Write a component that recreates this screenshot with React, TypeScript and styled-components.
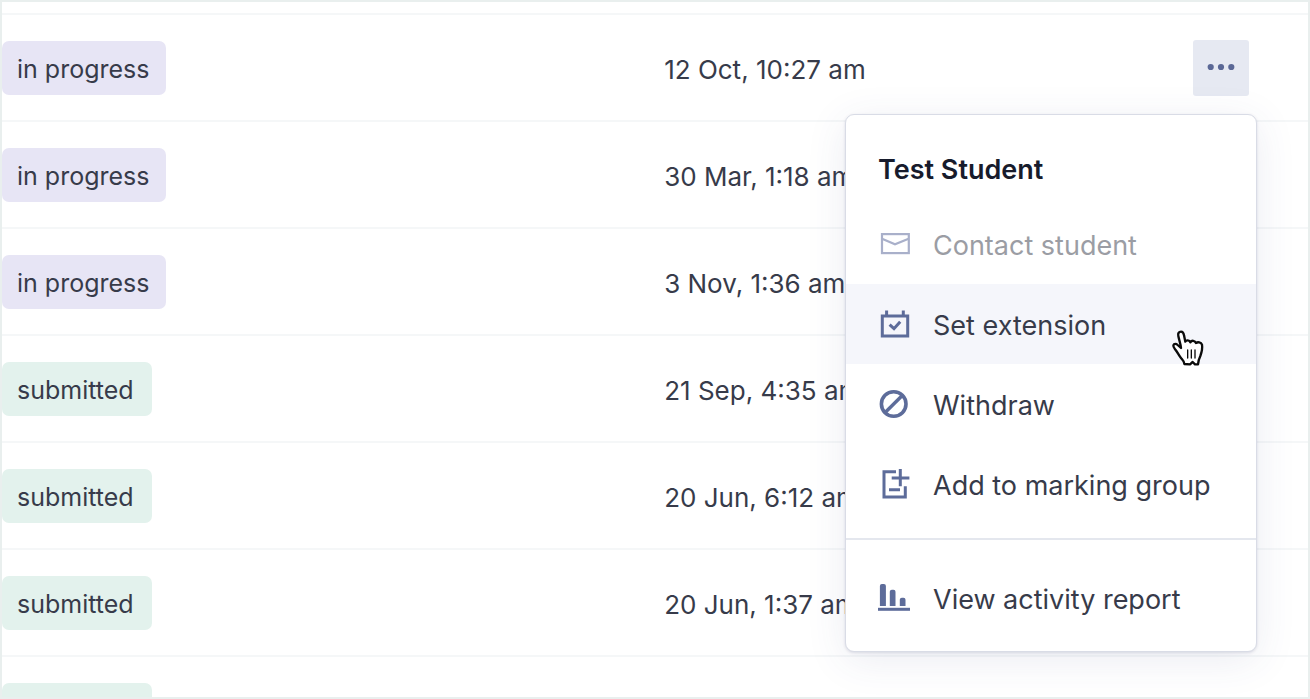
import React from "react";
import styled, { createGlobalStyle } from "styled-components";

const GlobalStyle = createGlobalStyle`
  *, *::before, *::after { box-sizing: border-box; }
  body {
    margin: 0;
    background: #fff;
    color: #373b4a;
    font-family: Inter, "Liberation Sans", sans-serif;
    font-size: 25px;
    line-height: 32px;
  }
`;

const Page = styled.main`
  height: 100vh;
  overflow: hidden;
  border: 2px solid #e9efee;
  padding-top: 11px;
`;

const Table = styled.table`
  width: 100%;
  table-layout: fixed;
  border-collapse: separate;
  border-spacing: 0;
`;

const Row = styled.tr`
  height: 107px;
`;

const Cell = styled.td<{ $width?: string }>`
  width: ${(p) => p.$width ?? "auto"};
  padding: 1px 0 0;
  border-top: 2px solid #f5f7f8;
  vertical-align: middle;
  white-space: nowrap;
`;

const Status = styled.span<{ $tone: "progress" | "submitted" }>`
  display: inline-block;
  min-width: 150px;
  min-height: 54px;
  padding: 12px 17px 10px 15px;
  border-radius: 7px;
  vertical-align: middle;
  background: ${(p) => (p.$tone === "progress" ? "#e7e5f5" : "#e3f2ed")};
`;

const DateText = styled.time`
  display: block;
  padding-top: 4px;
  font-size: 26px;
`;

const Actions = styled.div`
  position: relative;
  display: flex;
  justify-content: flex-end;
  padding: 0 59px 1px 0;
`;

const MoreButton = styled.button`
  display: flex;
  align-items: center;
  justify-content: center;
  width: 56px;
  height: 56px;
  padding: 0 0 2px;
  border: 0;
  border-radius: 3px;
  background: #e6e9f2;
  color: #5b6896;
  cursor: pointer;
`;

const Menu = styled.div`
  position: absolute;
  z-index: 1;
  top: 74px;
  right: 51px;
  width: 412px;
  padding: 39px 0 13px;
  border: 1px solid #d9dce6;
  border-radius: 9px;
  background: #fff;
  box-shadow: 0 1px 3px rgba(60, 70, 110, 0.16), 0 8px 40px rgba(60, 70, 130, 0.1);
`;

const MenuTitle = styled.h2`
  margin: 0 0 18px;
  padding: 0 32px;
  color: #171b2c;
  font-size: 27px;
  font-weight: 600;
  line-height: 32px;
`;

const MenuItem = styled.button<{ $active?: boolean }>`
  position: relative;
  display: flex;
  align-items: center;
  gap: 23px;
  width: 100%;
  height: 80px;
  padding: 0 32px;
  border: 0;
  background: ${(p) => (p.$active ? "#f5f6fb" : "transparent")};
  color: #373b4a;
  font: inherit;
  font-size: 27px;
  text-align: left;
  white-space: nowrap;
  cursor: pointer;

  &:disabled {
    color: #9b9da4;
    cursor: default;
  }
`;

const MenuLabel = styled.span`
  padding-top: 4px;
`;

const Divider = styled.hr`
  height: 2px;
  margin: 14px 0 18px;
  border: 0;
  background: #e4e7ee;
`;

const Icon = styled.svg<{ $faded?: boolean }>`
  flex: none;
  width: 32px;
  height: 32px;
  fill: none;
  stroke: ${(p) => (p.$faded ? "#a9b0ca" : "#5d6c9a")};
  stroke-width: ${(p) => (p.$faded ? 2.2 : 3)};
`;

const Pointer = styled.svg`
  position: absolute;
  top: 45px;
  right: 51px;
  width: 34px;
  height: 38px;
`;

const MailIcon = () => (
  <Icon $faded viewBox="0 0 32 32" aria-hidden="true">
    <rect x="4" y="6.1" width="26.8" height="19" />
    <path d="M4 10.8l13 5.4 13.6-5.4" />
  </Icon>
);

const CalendarIcon = () => (
  <Icon viewBox="0 0 32 32" aria-hidden="true">
    <rect x="4.3" y="8" width="25.4" height="20" />
    <path d="M8.6 2.6V8M25.3 2.6V8" />
    <path d="M11.6 16.6l4.4 4.1 6.2-7" />
  </Icon>
);

const WithdrawIcon = () => (
  <Icon viewBox="0 0 32 32" aria-hidden="true">
    <circle cx="15.7" cy="16" r="12.3" strokeWidth="3.6" />
    <path d="M7.4 24.3L24 7.7" strokeWidth="3.4" />
  </Icon>
);

const AddIcon = () => (
  <Icon viewBox="0 0 32 32" aria-hidden="true">
    <path d="M18 3.7H6v25.2h21.3V18.2" />
    <path d="M22.3 1v17.2M13.7 10H31.4M11 21.7h11" />
  </Icon>
);

const ReportIcon = () => (
  <Icon viewBox="0 0 32 32" aria-hidden="true">
    <path d="M0 27.3h32" />
    <g stroke="none" fill="#5d6c9a">
      <path d="M1.9 24V3.9a2 2 0 0 1 2-2h2a2 2 0 0 1 2 2V24z" />
      <path d="M11.8 24V9.8a2 2 0 0 1 2-2h1.7a2 2 0 0 1 2 2V24z" />
      <path d="M21.8 24v-6.2a2 2 0 0 1 2-2h1.7a2 2 0 0 1 2 2V24z" />
    </g>
  </Icon>
);

const HandPointer = () => (
  <Pointer viewBox="64 56 102 114" aria-hidden="true">
    <path
      d="M104 161C103 151 98 148 94 143C88 136 84 127 78 119C74 114 70 110 71 105C73 99 80 100 84 104L94 113C93 101 88 88 86 77C84 68 88 64 94 64C100 64 102 68 103 75L107 94C109 89 119 88 122 96C126 89 136 90 139 98C144 94 154 95 157 103C159 115 156 126 152 137C147 147 146 153 145 162L136 162L129 155L121 162Z"
      fill="#fff"
      stroke="#0b0b0b"
      strokeWidth="7"
      strokeLinejoin="round"
    />
    <path d="M114 119v24M125 119v24M136 119v24" stroke="#0b0b0b" strokeWidth="4" strokeLinecap="round" />
  </Pointer>
);

type Entry = { tone: "progress" | "submitted"; status?: string; date?: string };

const entries: Entry[] = [
  { tone: "progress", status: "in progress", date: "12 Oct, 10:27 am" },
  { tone: "progress", status: "in progress", date: "30 Mar, 1:18 am" },
  { tone: "progress", status: "in progress", date: "3 Nov, 1:36 am" },
  { tone: "submitted", status: "submitted", date: "21 Sep, 4:35 am" },
  { tone: "submitted", status: "submitted", date: "20 Jun, 6:12 am" },
  { tone: "submitted", status: "submitted", date: "20 Jun, 1:37 am" },
  { tone: "submitted" },
];

const StudentMenu = () => (
  <Menu role="menu" aria-labelledby="student-name">
    <MenuTitle id="student-name">Test Student</MenuTitle>
    <MenuItem role="menuitem" disabled>
      <MailIcon />
      <MenuLabel>Contact student</MenuLabel>
    </MenuItem>
    <MenuItem role="menuitem" $active>
      <CalendarIcon />
      <MenuLabel>Set extension</MenuLabel>
      <HandPointer />
    </MenuItem>
    <MenuItem role="menuitem">
      <WithdrawIcon />
      <MenuLabel>Withdraw</MenuLabel>
    </MenuItem>
    <MenuItem role="menuitem">
      <AddIcon />
      <MenuLabel>Add to marking group</MenuLabel>
    </MenuItem>
    <Divider />
    <MenuItem role="menuitem">
      <ReportIcon />
      <MenuLabel>View activity report</MenuLabel>
    </MenuItem>
  </Menu>
);

export default function App() {
  return (
    <>
      <GlobalStyle />
      <Page>
        <Table>
          <tbody>
            {entries.map((entry, index) => (
              <Row key={index}>
                <Cell $width="50.7%">
                  <Status $tone={entry.tone}>{entry.status}</Status>
                </Cell>
                <Cell $width="20%">{entry.date && <DateText>{entry.date}</DateText>}</Cell>
                <Cell>
                  {index === 0 && (
                    <Actions>
                      <MoreButton aria-label="Student actions" aria-haspopup="menu" aria-expanded="true">
                        <svg width="28" height="8" viewBox="0 0 28 8" fill="currentColor" aria-hidden="true">
                          <circle cx="3.7" cy="4" r="3.1" />
                          <circle cx="14" cy="4" r="3.1" />
                          <circle cx="24.3" cy="4" r="3.1" />
                        </svg>
                      </MoreButton>
                      <StudentMenu />
                    </Actions>
                  )}
                </Cell>
              </Row>
            ))}
          </tbody>
        </Table>
      </Page>
    </>
  );
}
